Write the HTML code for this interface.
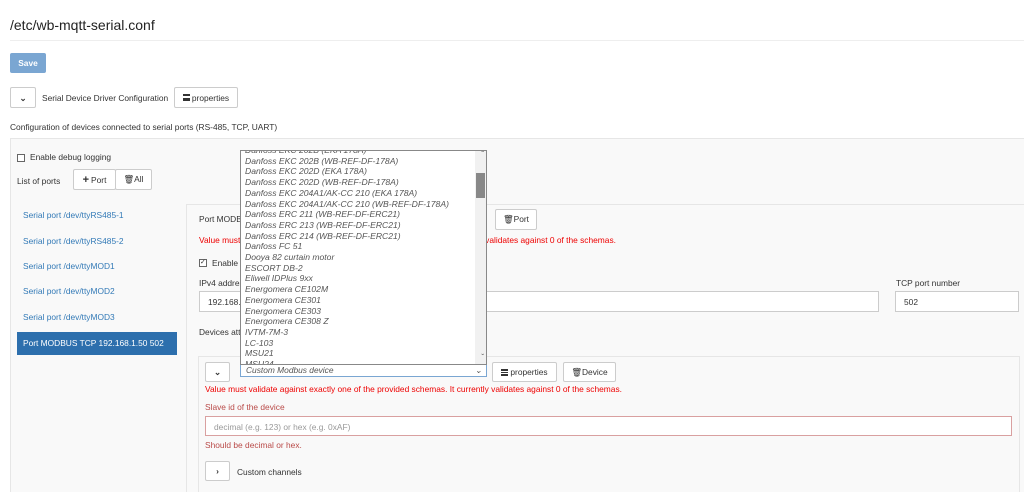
<!DOCTYPE html><html><head><style>
*{box-sizing:border-box;margin:0;padding:0}
html,body{width:1024px;height:492px;overflow:hidden}
body{background:#fff;font-family:"Liberation Sans",sans-serif;font-size:8.4px;color:#333;position:relative}
.a{position:absolute;white-space:nowrap}
.btn{position:absolute;background:#fff;border:1px solid #ccc;border-radius:2px;font-size:8.4px;color:#333;display:flex;align-items:center;justify-content:center;gap:2px;white-space:nowrap}
.inp{position:absolute;background:#fff;border:1px solid #ccc;white-space:nowrap}
.red{color:#e00;position:absolute;font-size:8.4px;white-space:nowrap}
.lnk{position:absolute;color:#337ab7;font-size:8.4px;white-space:nowrap}
.ico{display:inline-block;width:7px;height:7px;border-top:2px solid #333;border-bottom:2px solid #333;position:relative}
.ico:after{content:"";position:absolute;left:0;right:0;top:1.5px;height:1px;background:#333}
</style></head><body>
<div class="a" style="left:10px;top:17px;font-size:14px;color:#222">/etc/wb-mqtt-serial.conf</div>
<div class="a" style="left:10px;top:40px;width:1014px;height:1px;background:#eee"></div>
<div class="a" style="left:10px;top:53px;width:36px;height:20px;background:#7aa6d2;border-radius:2px;color:#fff;font-weight:bold;display:flex;align-items:center;justify-content:center">Save</div>
<div class="btn" style="left:10px;top:87px;width:26px;height:21px;font-weight:bold">&#8964;</div>
<div class="a" style="left:42px;top:93px">Serial Device Driver Configuration</div>
<div class="btn" style="left:174px;top:87px;width:64px;height:21px"><span class="ico"></span>properties</div>
<div class="a" style="left:10px;top:122px">Configuration of devices connected to serial ports (RS-485, TCP, UART)</div>
<div class="a" style="left:10px;top:138px;width:1014px;height:354px;background:#f9f9f9;border:1px solid #e6e6e6;border-bottom:none;border-right:none"></div>
<div class="a" style="left:17px;top:154px;width:8px;height:8px;border:1px solid #666;background:#fff"></div>
<div class="a" style="left:30px;top:152px">Enable debug logging</div>
<div class="a" style="left:17px;top:176px">List of ports</div>
<div class="btn" style="left:73px;top:169px;width:43px;height:21px"><b style="font-size:11px">+</b>Port</div>
<div class="btn" style="left:115px;top:169px;width:37px;height:21px">&#128465;All</div>
<div class="lnk" style="left:23px;top:210px">Serial port /dev/ttyRS485-1</div>
<div class="lnk" style="left:23px;top:236px">Serial port /dev/ttyRS485-2</div>
<div class="lnk" style="left:23px;top:261px">Serial port /dev/ttyMOD1</div>
<div class="lnk" style="left:23px;top:286px">Serial port /dev/ttyMOD2</div>
<div class="lnk" style="left:23px;top:312px">Serial port /dev/ttyMOD3</div>
<div class="a" style="left:17px;top:332px;width:160px;height:23px;background:#2d6fad;color:#fff;padding:6px 6px">Port MODBUS TCP 192.168.1.50 502</div>
<div class="a" style="left:186px;top:204px;width:838px;height:288px;background:#f9f9f9;border:1px solid #e6e6e6;border-bottom:none;border-right:none"></div>
<div class="a" style="left:199px;top:214px">Port MODBUS TCP</div>
<div class="btn" style="left:495px;top:209px;width:42px;height:21px">&#128465;Port</div>
<div class="red" style="left:199px;top:235px">Value must validate against exactly one of the provided schemas. It currently validates against 0 of the schemas.</div>
<div class="a" style="left:199px;top:259px;width:8px;height:8px;border:1px solid #666;background:#fff;font-size:7px;line-height:6px">&#10003;</div>
<div class="a" style="left:212px;top:258px">Enable</div>
<div class="a" style="left:199px;top:278px">IPv4 address</div>
<div class="inp" style="left:199px;top:291px;width:680px;height:21px;padding:5px 8px">192.168.1.50</div>
<div class="a" style="left:896px;top:278px">TCP port number</div>
<div class="inp" style="left:895px;top:291px;width:124px;height:21px;padding:5px 8px">502</div>
<div class="a" style="left:199px;top:327px">Devices attached</div>
<div class="a" style="left:198px;top:356px;width:822px;height:136px;background:#f9f9f9;border:1px solid #e6e6e6;border-bottom:none"></div>
<div class="btn" style="left:205px;top:362px;width:25px;height:20px;font-weight:bold">&#8964;</div>
<div class="inp" style="left:240px;top:363px;width:247px;height:14px;border-color:#7aa6d2;padding:1px 5px;font-style:italic;color:#555">Custom Modbus device<span style="position:absolute;right:4px">&#8964;</span></div>
<div class="btn" style="left:492px;top:362px;width:65px;height:20px"><span class="ico"></span>properties</div>
<div class="btn" style="left:563px;top:362px;width:53px;height:20px">&#128465;Device</div>
<div class="red" style="left:205px;top:384px">Value must validate against exactly one of the provided schemas. It currently validates against 0 of the schemas.</div>
<div class="a" style="left:205px;top:402px;color:#b94a48">Slave id of the device</div>
<div class="inp" style="left:205px;top:416px;width:807px;height:20px;border-color:#d9a0a0;padding:5px 8px;color:#999">decimal (e.g. 123) or hex (e.g. 0xAF)</div>
<div class="a" style="left:205px;top:440px;color:#b94a48">Should be decimal or hex.</div>
<div class="btn" style="left:205px;top:461px;width:25px;height:20px;font-weight:bold">&#8250;</div>
<div class="a" style="left:237px;top:467px">Custom channels</div>
<div class="a" style="left:240px;top:150px;width:247px;height:215px;background:#fff;border:1px solid #888;overflow:hidden;font-style:italic;color:#555;line-height:10.7px;font-size:8.6px">
<div style="position:absolute;left:4px;top:-6px">Danfoss EKC 202B (EKA 178A)<br>Danfoss EKC 202B (WB-REF-DF-178A)<br>Danfoss EKC 202D (EKA 178A)<br>Danfoss EKC 202D (WB-REF-DF-178A)<br>Danfoss EKC 204A1/AK-CC 210 (EKA 178A)<br>Danfoss EKC 204A1/AK-CC 210 (WB-REF-DF-178A)<br>Danfoss ERC 211 (WB-REF-DF-ERC21)<br>Danfoss ERC 213 (WB-REF-DF-ERC21)<br>Danfoss ERC 214 (WB-REF-DF-ERC21)<br>Danfoss FC 51<br>Dooya 82 curtain motor<br>ESCORT DB-2<br>Eliwell IDPlus 9xx<br>Energomera CE102M<br>Energomera CE301<br>Energomera CE303<br>Energomera CE308 Z<br>IVTM-7M-3<br>LC-103<br>MSU21<br>MSU24</div>
<div style="position:absolute;right:0;top:0;width:11px;height:213px;background:#f1f1f1"></div>
<div style="position:absolute;right:1px;top:22px;width:9px;height:25px;background:#888"></div>
<div style="position:absolute;right:2px;top:-1px;font-style:normal;font-size:8px">&#710;</div>
<div style="position:absolute;right:2px;top:202px;font-style:normal;font-size:8px">&#711;</div>
</div>
</body></html>
